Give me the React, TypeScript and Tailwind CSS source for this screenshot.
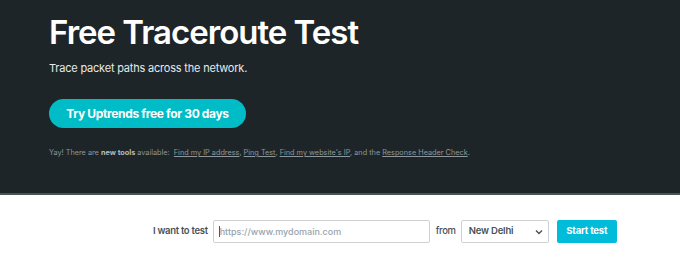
import React from "react";

export default function App() {
  return (
    <div className="w-[680px] h-[258px] bg-white overflow-hidden" style={{ fontFamily: "Inter, 'Noto Sans', sans-serif" }}>
      <div className="bg-[#1e2528] h-[195px] border-b-2 border-[#4b5357] pl-[49px] pt-[12px]">
        <h1 className="text-[33px] leading-[40px] font-semibold text-white tracking-[-1px]">Free Traceroute Test</h1>
        <p className="mt-[9px] text-[11px] leading-[14px] text-[#e6e9ea] tracking-[-0.2px]">Trace packet paths across the network.</p>
        <button className="mt-[24px] h-[29px] w-[197px] rounded-full bg-[#00bcc6] text-white text-[12px] font-bold tracking-[-0.35px]">
          Try Uptrends free for 30 days
        </button>
        <p className="mt-[20px] text-[7.3px] leading-[10px] text-[#8d979b]">
          Yay! There are <b className="font-bold text-[#b4bcbf]">new tools</b> available:{"\u00a0\u00a0"}
          <a className="underline">Find my IP address</a>, <a className="underline">Ping Test</a>,{" "}
          <a className="underline">Find my website's IP</a>, and the <a className="underline">Response Header Check</a>.
        </p>
      </div>
      <div className="flex items-center pl-[153px] pt-[25px]">
        <span className="text-[9.5px] font-semibold text-[#4a5156] tracking-[-0.3px]">I want to test</span>
        <div className="ml-[5px] w-[217px] h-[23px] border border-[#cdd1d4] rounded-[2px] flex items-center pl-[5px]">
          <span className="w-px h-[11px] bg-[#555]" />
          <span className="text-[9px] font-medium text-[#9aa3ad]">https://www.mydomain.com</span>
        </div>
        <span className="ml-[6px] text-[9.5px] font-medium text-[#4a5156] tracking-[-0.3px]">from</span>
        <div className="ml-[5px] w-[88px] h-[23px] border border-[#cdd1d4] rounded-[2px] flex items-center justify-between pl-[7px] pr-[5px]">
          <span className="text-[9.5px] font-semibold text-[#4a5156] tracking-[-0.2px]">New Delhi</span>
          <svg width="8" height="6" viewBox="0 0 8 6"><path d="M1 1.5l3 3 3-3" fill="none" stroke="#4a5156" strokeWidth="1.4" /></svg>
        </div>
        <button className="ml-[8px] w-[60px] h-[23px] rounded-[2px] bg-[#00bcd9] text-white text-[9.5px] font-bold tracking-[-0.2px]">Start test</button>
      </div>
    </div>
  );
}
